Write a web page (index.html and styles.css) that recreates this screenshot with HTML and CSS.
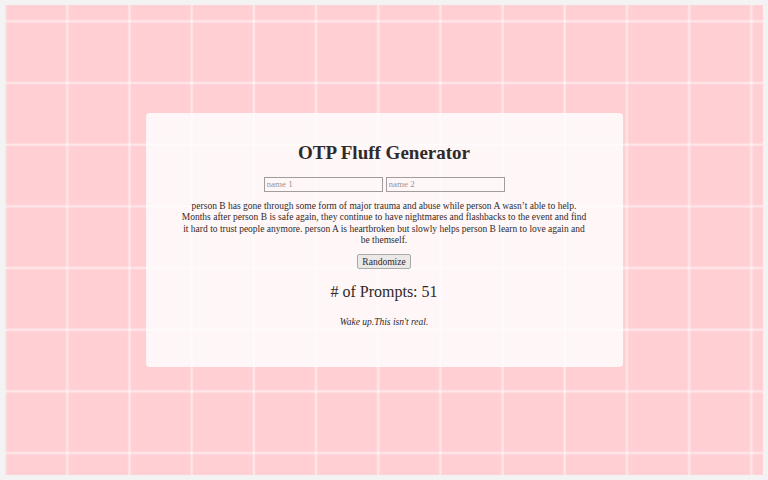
FILE: index.html
```html
<!DOCTYPE html>
<html lang="en">
	<head>
		<meta charset="UTF-8" />
		<meta name="viewport" content="width=device-width, initial-scale=1.0" />
		<title>OTP Fluff Generator</title>
		<link rel="stylesheet" href="styles.css">
	</head>
	<body>
		<div class="card">
			<h1 class="title">OTP Fluff Generator</h1>
			<form action="" class="names">
				<input type="text" id="name-a" placeholder="name 1" />
				<input type="text" id="name-b" placeholder="name 2" />
			</form>
			<p id="prompt" class="prompt">person B has gone through some form of major trauma and abuse while person A wasn’t able to help. Months after person B is safe again, they continue to have nightmares and flashbacks to the event and find it hard to trust people anymore. person A is heartbroken but slowly helps person B learn to love again and be themself.</p>
			<button id="randomize-btn" class="randomize">Randomize</button>
			<h3 class="count"># of Prompts: 51</h3>
			<p class="quote">Wake up.This isn't real.</p>
		</div>
	</body>
</html>
```

FILE: styles.css
```css
html {
	background-color: #f3f3f3;
}
body {
	margin: 5px;
	min-height: calc(100vh - 10px);
	display: flex;
	align-items: center;
	justify-content: center;
	font-family: "Liberation Serif", "Times New Roman", serif;
	color: #2f2a2a;
	background-color: #ffcfd4;
	/* soft white grid */
	background-image:
		linear-gradient(to right, transparent 0, rgba(255, 255, 255, 0.2) 0.5px, rgba(255, 255, 255, 0.5) 1.2px, rgba(255, 255, 255, 0.5) 2.3px, rgba(255, 255, 255, 0.2) 3px, transparent 3.6px),
		linear-gradient(to bottom, transparent 0, rgba(255, 255, 255, 0.2) 0.5px, rgba(255, 255, 255, 0.5) 1.2px, rgba(255, 255, 255, 0.5) 2.3px, rgba(255, 255, 255, 0.2) 3px, transparent 3.6px);
	background-size: 62.2px 100%, 100% 61.7px;
	background-position: 60.5px 0, 0 14.5px;
}
.card {
	width: 477px;
	box-sizing: border-box;
	padding: 29px 36px 40px;
	background-color: rgba(255, 255, 255, 0.8);
	border-radius: 4px;
	display: flex;
	flex-direction: column;
	align-items: center;
	text-align: center;
}
.title {
	font-size: 19px;
	margin: 0 0 13px;
}
.names {
	display: flex;
	gap: 3px;
	margin: 0;
}
.names input {
	width: 119px;
	height: 15px;
	box-sizing: border-box;
	padding: 0 2px;
	font-family: inherit;
	font-size: 9px;
	background: transparent;
	border: 1px solid #a39c9c;
}
.names input::placeholder {
	color: #9a9595;
}
.prompt {
	font-size: 9.5px;
	line-height: 11.4px;
	margin: 9px 0 8px;
}
.randomize {
	font-family: inherit;
	font-size: 9.5px;
	color: #2f2a2a;
	height: 15px;
	padding: 0 4px;
	background-color: #ebe8e8;
	border: 1px solid #aaa;
	border-radius: 2px;
}
.count {
	font-size: 16px;
	font-weight: normal;
	margin: 14px 0 16px;
}
.quote {
	font-size: 9.5px;
	font-style: italic;
	margin: 0;
}
```
